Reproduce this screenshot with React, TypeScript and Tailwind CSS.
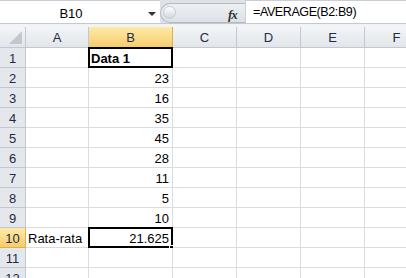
import React from 'react';

const cols = ['A', 'B', 'C', 'D', 'E', 'F'];

// cell contents keyed by "col+row"
const cells: Record<string, { text: string; align: 'left' | 'right'; bold?: boolean }> = {
  B1: { text: 'Data 1', align: 'left', bold: true },
  B2: { text: '23', align: 'right' },
  B3: { text: '16', align: 'right' },
  B4: { text: '35', align: 'right' },
  B5: { text: '45', align: 'right' },
  B6: { text: '28', align: 'right' },
  B7: { text: '11', align: 'right' },
  B8: { text: '5', align: 'right' },
  B9: { text: '10', align: 'right' },
  A10: { text: 'Rata-rata', align: 'left' },
  B10: { text: '21.625', align: 'right' },
};

const rows = Array.from({ length: 12 }, (_, i) => i + 1);

function FormulaBar() {
  return (
    <div className="flex h-[24px] bg-[#dfe3e8] border-b border-[#c3c9d0]">
      <div className="relative w-[160px] h-[23px] bg-white border-t border-[#c9ced5] flex items-center">
        <span className="w-[142px] text-center text-[13px] leading-[19px] pt-[2px]">B10</span>
        <span className="absolute left-[148px] top-[11px] w-0 h-0 border-l-[4px] border-r-[4px] border-t-[4px] border-l-transparent border-r-transparent border-t-[#333]" />
      </div>
      <div className="relative w-[85px] h-[20px] mt-[3px] rounded-l-full border border-r-0 border-[#b3bac3] bg-gradient-to-b from-[#eef0f3] to-[#dde1e6]">
        <div className="absolute left-[2px] top-[2px] w-[13px] h-[13px] rounded-full border border-[#c7ccd3] bg-gradient-to-b from-[#ffffff] to-[#d3d7dc]" />
        <span
          className="absolute left-[67px] top-[1px] text-[13px] italic font-bold text-[#333] tracking-[-1px]"
          style={{ fontFamily: '"Liberation Serif", serif' }}
        >
          fx
        </span>
      </div>
      <div className="flex-1 h-[23px] bg-white border-l border-t border-[#c9ced5] pl-[7px] text-[12.5px] tracking-[-0.4px] leading-[19px] pt-[2px]">
        =AVERAGE(B2:B9)
      </div>
    </div>
  );
}

function ColHeader({ label, active }: { label: string; active: boolean }) {
  return (
    <div
      className={
        active
          ? 'h-[21px] border-r border-b border-[#e0ae4a] bg-gradient-to-b from-[#fdeaa8] to-[#f7cd6b] text-center text-[13px] leading-[19px] pt-[1px] text-[#1f2a44]'
          : 'h-[21px] border-r border-b border-[#c2c8cf] bg-gradient-to-b from-[#f3f5f7] to-[#e2e6ea] text-center text-[13px] leading-[19px] pt-[1px] text-[#1f2a44]'
      }
    >
      {label}
    </div>
  );
}

function RowHeader({ n, active }: { n: number; active: boolean }) {
  return (
    <div
      className={
        active
          ? 'h-[20px] border-r border-b border-[#e0ae4a] bg-gradient-to-b from-[#fdeaa8] to-[#f7cd6b] text-center text-[13px] leading-[17px] pt-[2px] text-[#1f2a44]'
          : 'h-[20px] border-r border-b border-[#c2c8cf] bg-[#e4e7eb] text-center text-[13px] leading-[17px] pt-[2px] text-[#1f2a44]'
      }
    >
      {n}
    </div>
  );
}

function Cell({ id }: { id: string }) {
  const c = cells[id];
  const boxed = id === 'B1' || id === 'B10';
  return (
    <div className="relative h-[20px] border-r border-b border-[#dadcdd] bg-white">
      {c && (
        <div
          className={`whitespace-nowrap text-[13px] leading-[17px] pt-[2px] text-black ${
            c.align === 'right' ? 'text-right pr-[3px]' : 'text-left pl-[2px]'
          } ${c.bold ? 'font-bold' : ''}`}
        >
          {c.text}
        </div>
      )}
      {boxed && <div className="absolute inset-[-1px] border-2 border-black" />}
      {id === 'B10' && (
        <div className="absolute right-[-4px] bottom-[-5px] w-[7px] h-[7px] bg-black border border-white" />
      )}
    </div>
  );
}

export default function App() {
  return (
    <div
      className="w-[406px] h-[278px] overflow-hidden bg-white"
      style={{ fontFamily: '"Liberation Sans", Arial, sans-serif' }}
    >
      <FormulaBar />
      <div className="h-[3px] bg-[#f2f3f5]" />
      <div className="grid grid-cols-[26px_63px_84px_64px_64px_64px_64px] w-[429px]">
        <div className="relative h-[21px] border-r border-b border-[#c2c8cf] bg-gradient-to-b from-[#f3f5f7] to-[#e2e6ea]">
          <svg className="absolute right-[3px] bottom-[3px]" width="13" height="13" viewBox="0 0 13 13">
            <polygon points="13,0 13,13 0,13" fill="#c3c8ce" />
          </svg>
        </div>
        {cols.map((c) => (
          <ColHeader key={c} label={c} active={c === 'B'} />
        ))}
        {rows.map((r) => (
          <React.Fragment key={r}>
            <RowHeader n={r} active={r === 10} />
            {cols.map((c) => (
              <Cell key={c + r} id={c + r} />
            ))}
          </React.Fragment>
        ))}
      </div>
    </div>
  );
}
